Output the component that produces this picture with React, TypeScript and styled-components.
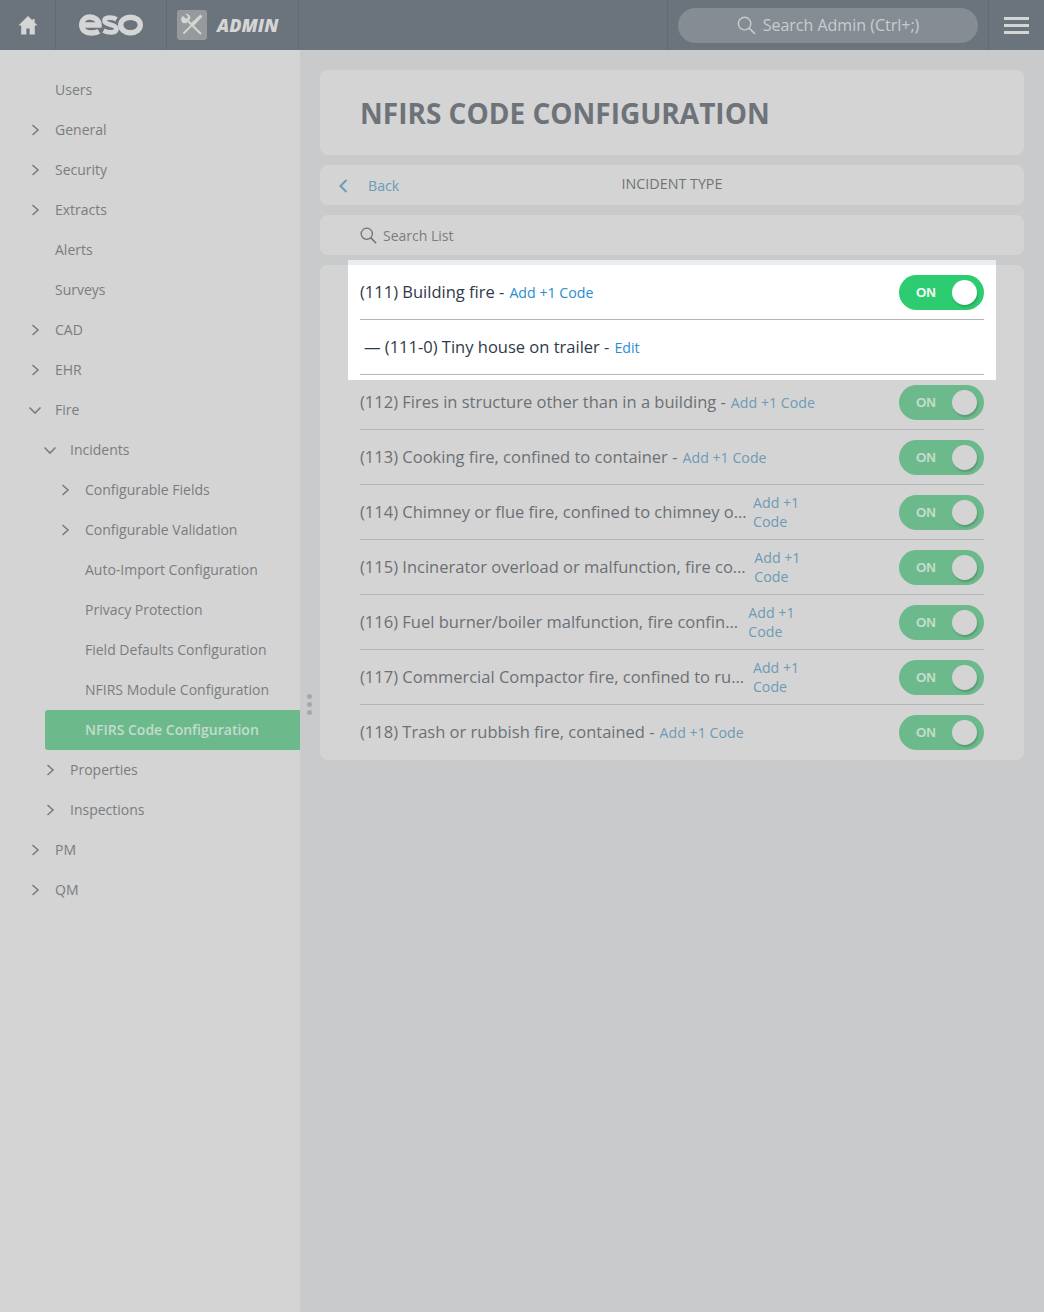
import React from "react";
import styled, { createGlobalStyle } from "styled-components";

const Global = createGlobalStyle`
  html, body { margin: 0; padding: 0; background: #c9cacc; }
  body { font-family: "Open Sans", "Liberation Sans", sans-serif; }
  * { box-sizing: border-box; }
`;

const Page = styled.div`
  width: 1044px;
  height: 1312px;
  display: flex;
  flex-direction: column;
  overflow: hidden;
`;

const TopBar = styled.header`
  height: 50px;
  flex: none;
  display: flex;
  background: #6b737d;
  color: #d4d5d5;
`;

const BarCell = styled.div<{ $w?: number; $grow?: boolean }>`
  width: ${(p) => (p.$w ? `${p.$w}px` : "auto")};
  flex: ${(p) => (p.$grow ? "1" : "none")};
  display: flex;
  align-items: center;
  justify-content: center;
  border-right: 1px solid #626a74;
`;

const AdminCell = styled(BarCell)`
  justify-content: flex-start;
  padding-left: 10px;
  gap: 10px;
`;

const AdminBadge = styled.div`
  width: 30px;
  height: 30px;
  border-radius: 3px;
  background: #959b9d;
  display: flex;
  align-items: center;
  justify-content: center;
`;

const AdminWord = styled.span`
  font-size: 18px;
  font-weight: 800;
  font-style: italic;
  color: #d4d5d5;
`;

const SearchCell = styled(BarCell)`
  padding-left: 10px;
  justify-content: flex-start;
`;

const SearchPill = styled.div`
  width: 300px;
  height: 35px;
  border-radius: 18px;
  background: #868c94;
  display: flex;
  align-items: center;
  justify-content: center;
  gap: 7px;
  font-size: 16px;
  color: #c9cccf;
`;

const MenuCell = styled.div`
  flex: 1;
  display: flex;
  flex-direction: column;
  align-items: center;
  justify-content: center;
  gap: 4px;
  padding-right: 1px;
`;

const MenuBar = styled.span`
  width: 25px;
  height: 3px;
  background: #d4d5d5;
`;

const Body = styled.div`
  flex: 1;
  display: flex;
`;

const Sidebar = styled.nav`
  width: 300px;
  flex: none;
  background: #d4d4d4;
  padding-top: 20px;
  position: relative;
`;

const NavItem = styled.div<{ $level: number; $active?: boolean }>`
  height: 40px;
  display: flex;
  align-items: center;
  position: relative;
  font-size: 14px;
  padding-bottom: 2px;
  color: ${(p) => (p.$active ? "#c3dccd" : "#7a7d80")};
  font-weight: ${(p) => (p.$active ? 600 : 400)};
  background: ${(p) => (p.$active ? "#6cba8b" : "transparent")};
  margin-left: ${(p) => (p.$active ? "45px" : "0")};
  padding-left: ${(p) => (p.$active ? "40px" : `${55 + p.$level * 15}px`)};
  border-radius: ${(p) => (p.$active ? "3px 0 0 3px" : "0")};
`;

const Chevron = styled.svg<{ $level: number }>`
  position: absolute;
  left: ${(p) => 28 + p.$level * 15}px;
  top: 13px;
  width: 14px;
  height: 14px;
  fill: none;
  stroke: #7a7d80;
  stroke-width: 1.6;
`;

const Handle = styled.div`
  position: absolute;
  right: -12px;
  top: 644px;
  display: flex;
  flex-direction: column;
  gap: 3px;
`;

const HandleDot = styled.span`
  width: 5px;
  height: 5px;
  border-radius: 50%;
  background: #a5a8aa;
`;

const Main = styled.main`
  flex: 1;
  padding: 20px 20px 0;
  display: flex;
  flex-direction: column;
  gap: 10px;
  align-items: stretch;
`;

const Card = styled.section`
  background: #d4d4d4;
  border-radius: 8px;
`;

const TitleCard = styled(Card)`
  height: 85px;
  padding: 1px 0 0 40px;
  display: flex;
  align-items: center;
`;

const Title = styled.h1`
  margin: 0;
  font-size: 28px;
  font-weight: 700;
  color: #6d7379;
`;

const BackCard = styled(Card)`
  height: 40px;
  position: relative;
  display: flex;
  align-items: center;
  justify-content: center;
  font-size: 14.3px;
  color: #6f7376;
  padding-bottom: 4px;
`;

const BackLink = styled.div`
  position: absolute;
  left: 18px;
  top: 10px;
  display: flex;
  align-items: center;
  gap: 19px;
  font-size: 14.2px;
  color: #6d9bb5;
  height: 20px;
  padding-top: 1px;
`;

const SearchCard = styled(Card)`
  height: 40px;
  padding-left: 40px;
  display: flex;
  align-items: center;
  gap: 6px;
  font-size: 14px;
  color: #7a7d80;
`;

const ListCard = styled(Card)`
  height: 495px;
  padding: 0 40px;
`;

const Spotlight = styled.div`
  position: relative;
  margin: -5px -12px -5px;
  padding: 0 12px 5px;
  border-top: 5px solid #e9edef;
  background: #fff;
`;

const Row = styled.div<{ $last?: boolean }>`
  height: 55px;
  display: flex;
  align-items: center;
  justify-content: space-between;
  border-bottom: ${(p) => (p.$last ? "none" : "1px solid #b4b5b5")};
`;

const RowMain = styled.div`
  width: 470px;
  display: flex;
  align-items: center;
  gap: 5px;
  min-width: 0;
`;

const RowText = styled.span<{ $lit?: boolean; $indent?: boolean }>`
  white-space: nowrap;
  overflow: hidden;
  text-overflow: ellipsis;
  min-width: 0;
  font-size: 16.5px;
  padding-bottom: 2px;
  color: ${(p) => (p.$lit ? "#2f3a48" : "#6c7075")};
  padding-left: ${(p) => (p.$indent ? "4px" : "0")};
`;

const RowLink = styled.a<{ $lit?: boolean }>`
  font-size: 14.2px;
  line-height: 19px;
  color: ${(p) => (p.$lit ? "#2a8dd0" : "#6d9bb5")};
`;

const Toggle = styled.div<{ $lit?: boolean }>`
  width: 85px;
  height: 35px;
  flex: none;
  border-radius: 18px;
  background: ${(p) => (p.$lit ? "#2ecc71" : "#6cba8b")};
  position: relative;
  display: flex;
  align-items: center;
  padding-left: 17px;
  font-size: 13.3px;
  font-weight: 700;
  color: ${(p) => (p.$lit ? "#f2fbf5" : "#c3dccd")};
  font-family: "Liberation Sans", Arial, sans-serif;
`;

const Knob = styled.span<{ $lit?: boolean }>`
  position: absolute;
  left: 53px;
  top: 5px;
  width: 25px;
  height: 25px;
  border-radius: 50%;
  background: ${(p) => (p.$lit ? "#fff" : "#d4d4d4")};
  box-shadow: 1px 2px 2px rgba(0, 0, 0, 0.18);
`;

const nav: { label: string; level: number; arrow?: "right" | "down"; active?: boolean }[] = [
  { label: "Users", level: 0 },
  { label: "General", level: 0, arrow: "right" },
  { label: "Security", level: 0, arrow: "right" },
  { label: "Extracts", level: 0, arrow: "right" },
  { label: "Alerts", level: 0 },
  { label: "Surveys", level: 0 },
  { label: "CAD", level: 0, arrow: "right" },
  { label: "EHR", level: 0, arrow: "right" },
  { label: "Fire", level: 0, arrow: "down" },
  { label: "Incidents", level: 1, arrow: "down" },
  { label: "Configurable Fields", level: 2, arrow: "right" },
  { label: "Configurable Validation", level: 2, arrow: "right" },
  { label: "Auto-Import Configuration", level: 2 },
  { label: "Privacy Protection", level: 2 },
  { label: "Field Defaults Configuration", level: 2 },
  { label: "NFIRS Module Configuration", level: 2 },
  { label: "NFIRS Code Configuration", level: 2, active: true },
  { label: "Properties", level: 1, arrow: "right" },
  { label: "Inspections", level: 1, arrow: "right" },
  { label: "PM", level: 0, arrow: "right" },
  { label: "QM", level: 0, arrow: "right" },
];

const codes = [
  "(112) Fires in structure other than in a building",
  "(113) Cooking fire, confined to container",
  "(114) Chimney or flue fire, confined to chimney or flue",
  "(115) Incinerator overload or malfunction, fire confined",
  "(116) Fuel burner/boiler malfunction, fire confined",
  "(117) Commercial Compactor fire, confined to rubbish",
  "(118) Trash or rubbish fire, contained",
];

const SearchGlyph = ({ size, color }: { size: number; color: string }) => (
  <svg width={size} height={size} viewBox="0 0 20 20" fill="none" stroke={color} strokeWidth="1.5">
    <circle cx="8" cy="8" r="6.6" />
    <path d="M12.8 12.8 L19 19" strokeWidth="1.7" />
  </svg>
);

const OnToggle = ({ lit }: { lit?: boolean }) => (
  <Toggle $lit={lit}>
    ON
    <Knob $lit={lit} />
  </Toggle>
);

export default function App() {
  return (
    <Page>
      <Global />
      <TopBar>
        <BarCell $w={56}>
          <svg width="20" height="20" viewBox="0 0 20 20" fill="#d4d5d5">
            <path d="M10 1 L0.4 10.6 H3.2 V19.5 H8.4 V13.5 H11.6 V19.5 H16.8 V10.6 H19.6 L16.6 7.6 V4 H14.6 V5.6 Z" />
          </svg>
        </BarCell>
        <BarCell $w={111}>
          <svg width="68" height="22" viewBox="0 0 68 22" fill="none" stroke="#d4d5d5">
            <path d="M4.7 11 H22 C22 6 17.5 3 13 3 C8 3 4.7 6.5 4.7 11 C4.7 16 8.5 19 14 19 C17 19 20 18.4 22 17.4" strokeWidth="5.4" />
            <path d="M39.5 5.4 C36 3.2 27.5 2.6 27.5 6.8 C27.5 11.6 39.5 9.6 39.5 14.8 C39.5 19.6 31 19 26.5 16.6" strokeWidth="4.8" />
            <ellipse cx="53.5" cy="11" rx="9.8" ry="7.8" strokeWidth="5.4" />
          </svg>
        </BarCell>
        <AdminCell $w={132}>
          <AdminBadge>
            <svg width="24" height="24" viewBox="0 0 24 24" fill="#d4d5d5" stroke="none">
              <path d="M2.8 2.8 L5.6 5.6 L7.6 5.2 L8 3.2 L5.2 1 C8.6 0.4 11 2.8 10.2 6 L7 9.2 L6 10.2 C3 11 0.6 8.6 1.2 5.2 Z" />
              <path d="M7.5 7.5 L21 21" stroke="#d4d5d5" strokeWidth="2.2" />
              <path d="M20.4 1.6 L22.4 3.6 L14 12.8 L11.2 10 Z" />
              <path d="M12.6 11.4 L3.4 20.6" stroke="#d4d5d5" strokeWidth="2" />
            </svg>
          </AdminBadge>
          <AdminWord>ADMIN</AdminWord>
        </AdminCell>
        <BarCell $w={369} />
        <SearchCell $w={321}>
          <SearchPill>
            <SearchGlyph size={19} color="#c9cccf" />
            Search Admin (Ctrl+;)
          </SearchPill>
        </SearchCell>
        <MenuCell>
          <MenuBar />
          <MenuBar />
          <MenuBar />
        </MenuCell>
      </TopBar>
      <Body>
        <Sidebar>
          {nav.map((n) => (
            <NavItem key={n.label} $level={n.level} $active={n.active}>
              {n.arrow && (
                <Chevron $level={n.level} viewBox="0 0 14 14">
                  {n.arrow === "right" ? <path d="M4.5 2 L10 7 L4.5 12" /> : <path d="M1.5 4.5 L7 10 L12.5 4.5" />}
                </Chevron>
              )}
              {n.label}
            </NavItem>
          ))}
          <Handle>
            <HandleDot />
            <HandleDot />
            <HandleDot />
          </Handle>
        </Sidebar>
        <Main>
          <TitleCard>
            <Title>NFIRS CODE CONFIGURATION</Title>
          </TitleCard>
          <BackCard>
            <BackLink>
              <svg width="11" height="16" viewBox="0 0 11 16" fill="none" stroke="#6d9bb5" strokeWidth="2">
                <path d="M8.5 2 L2.5 8 L8.5 14" />
              </svg>
              Back
            </BackLink>
            INCIDENT TYPE
          </BackCard>
          <SearchCard>
            <SearchGlyph size={17} color="#6c7075" />
            Search List
          </SearchCard>
          <ListCard>
            <Spotlight>
              <Row>
                <RowMain>
                  <RowText $lit>(111) Building fire -</RowText>
                  <RowLink $lit>Add +1 Code</RowLink>
                </RowMain>
                <OnToggle lit />
              </Row>
              <Row>
                <RowMain>
                  <RowText $lit $indent>— (111-0) Tiny house on trailer -</RowText>
                  <RowLink $lit>Edit</RowLink>
                </RowMain>
              </Row>
            </Spotlight>
            {codes.map((c, i) => (
              <Row key={c} $last={i === codes.length - 1}>
                <RowMain>
                  <RowText>{c} -</RowText>
                  <RowLink>Add +1 Code</RowLink>
                </RowMain>
                <OnToggle />
              </Row>
            ))}
          </ListCard>
        </Main>
      </Body>
    </Page>
  );
}
